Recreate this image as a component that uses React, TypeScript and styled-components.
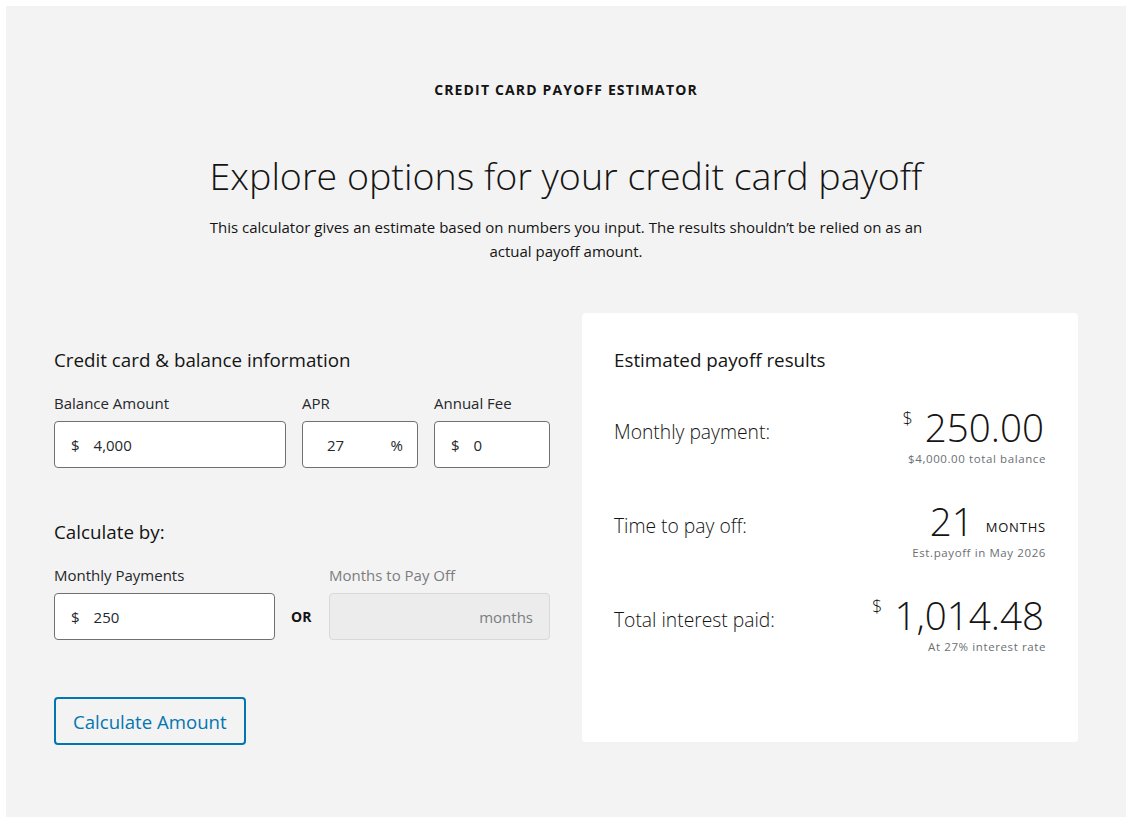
import React from 'react'
import styled, { createGlobalStyle } from 'styled-components'

const GlobalStyle = createGlobalStyle`
  html, body {
    margin: 0;
    padding: 0;
    background: #ffffff;
  }
  body {
    padding: 6px;
    font-family: 'Open Sans', 'Noto Sans', sans-serif;
    color: #141414;
  }
`

const Page = styled.main`
  background: #f3f3f3;
  width: 1120px;
  height: 811px;
  box-sizing: border-box;
  padding: 75px 48px 0;
  display: flex;
  flex-direction: column;
  align-items: center;
`

const Eyebrow = styled.div`
  font-size: 14px;
  font-weight: 700;
  letter-spacing: 1.15px;
  line-height: 18px;
  color: #141414;
`

const Headline = styled.h1`
  margin: 53px 0 0;
  font-size: 37.6px;
  font-weight: 300;
  line-height: 48px;
  color: #141414;
`

const Intro = styled.p`
  margin: 15px 0 0;
  width: 730px;
  text-align: center;
  font-size: 15px;
  line-height: 24px;
  color: #141414;
`

const Columns = styled.div`
  margin-top: 50px;
  width: 100%;
  display: grid;
  grid-template-columns: 496px 496px;
  justify-content: space-between;
  align-items: start;
`

const FormColumn = styled.section`
  display: flex;
  flex-direction: column;
  padding-top: 34px;
`

const SectionTitle = styled.h2<{ $top?: number }>`
  margin: ${p => p.$top ?? 0}px 0 0;
  font-size: 18.8px;
  font-weight: 500;
  line-height: 26px;
  color: #141414;
`

const FieldRow = styled.div<{ $cols: string }>`
  margin-top: 20px;
  display: grid;
  grid-template-columns: ${p => p.$cols};
  column-gap: 16px;
  align-items: end;
`

const Field = styled.label`
  display: flex;
  flex-direction: column;
  gap: 8px;
`

const Label = styled.span<{ $muted?: boolean }>`
  font-size: 15px;
  line-height: 20px;
  color: ${p => (p.$muted ? '#7b7d80' : '#25282b')};
`

const InputBox = styled.div<{ $disabled?: boolean; $pad?: number }>`
  height: 47px;
  box-sizing: border-box;
  border: 1px solid ${p => (p.$disabled ? '#d9d9d9' : '#707070')};
  border-radius: 4px;
  background: ${p => (p.$disabled ? '#ececec' : '#ffffff')};
  display: flex;
  align-items: center;
  padding: 0 ${p => p.$pad ?? 16}px;
  font-size: 15px;
  color: #25282b;
`

const Prefix = styled.span`
  color: #25282b;
  margin-right: 14px;
`

const Value = styled.span<{ $indent?: number }>`
  flex: 1;
  padding-left: ${p => p.$indent ?? 0}px;
  color: #25282b;
`

const Suffix = styled.span<{ $muted?: boolean }>`
  color: ${p => (p.$muted ? '#7b7d80' : '#25282b')};
`

const Or = styled.span`
  height: 47px;
  display: flex;
  align-items: center;
  font-size: 14px;
  font-weight: 700;
  color: #141414;
`

const Button = styled.button`
  margin-top: 57px;
  align-self: flex-start;
  height: 48px;
  padding: 0 17px;
  border: 2px solid #0276b1;
  border-radius: 4px;
  background: transparent;
  font-family: inherit;
  font-size: 18.6px;
  color: #0276b1;
  cursor: pointer;
`

const ResultCard = styled.section`
  background: #ffffff;
  border-radius: 4px;
  height: 429px;
  box-sizing: border-box;
  padding: 34px 32px 0;
  display: flex;
  flex-direction: column;
`

const ResultRow = styled.div<{ $top: number }>`
  margin-top: ${p => p.$top}px;
  display: flex;
  justify-content: space-between;
  align-items: flex-start;
`

const RowLabel = styled.span`
  font-size: 19.3px;
  font-weight: 300;
  line-height: 26px;
  color: #141414;
  padding-top: 16px;
`

const Figure = styled.div`
  display: flex;
  flex-direction: column;
  align-items: flex-end;
  padding-right: 2px;
`

const Amount = styled.div`
  display: flex;
  align-items: flex-start;
  font-size: 38.6px;
  font-weight: 300;
  line-height: 48px;
  height: 44px;
  color: #141414;
`

const Currency = styled.span`
  font-size: 18px;
  line-height: 22px;
  margin-right: 12px;
  margin-top: 4px;
`

const Unit = styled.span`
  font-size: 13px;
  font-weight: 400;
  letter-spacing: 0.8px;
  line-height: 20px;
  align-self: flex-end;
  margin-left: 12px;
  margin-right: -2px;
  margin-bottom: 4px;
`

const Note = styled.span`
  font-size: 11.5px;
  letter-spacing: 0.6px;
  line-height: 16px;
  color: #6b6f73;
  margin-top: 4px;
  margin-right: -2px;
`

const results = [
  {
    label: 'Monthly payment:',
    currency: true,
    value: '250.00',
    note: '$4,000.00 total balance',
    top: 30,
  },
  {
    label: 'Time to pay off:',
    value: '21',
    unit: 'MONTHS',
    note: 'Est.payoff in May 2026',
    top: 30,
  },
  {
    label: 'Total interest paid:',
    currency: true,
    value: '1,014.48',
    note: 'At 27% interest rate',
    top: 30,
  },
]

const App = () => {
  return (
    <>
      <GlobalStyle />
      <Page>
        <Eyebrow>CREDIT CARD PAYOFF ESTIMATOR</Eyebrow>
        <Headline>Explore options for your credit card payoff</Headline>
        <Intro>
          This calculator gives an estimate based on numbers you input. The
          results shouldn’t be relied on as an actual payoff amount.
        </Intro>
        <Columns>
          <FormColumn>
            <SectionTitle>Credit card &amp; balance information</SectionTitle>
            <FieldRow $cols="232px 116px 116px">
              <Field>
                <Label>Balance Amount</Label>
                <InputBox>
                  <Prefix>$</Prefix>
                  <Value>4,000</Value>
                </InputBox>
              </Field>
              <Field>
                <Label>APR</Label>
                <InputBox $pad={14}>
                  <Value $indent={10}>27</Value>
                  <Suffix>%</Suffix>
                </InputBox>
              </Field>
              <Field>
                <Label>Annual Fee</Label>
                <InputBox>
                  <Prefix>$</Prefix>
                  <Value>0</Value>
                </InputBox>
              </Field>
            </FieldRow>

            <SectionTitle $top={51}>Calculate by:</SectionTitle>
            <FieldRow $cols="221px auto 221px">
              <Field>
                <Label>Monthly Payments</Label>
                <InputBox>
                  <Prefix>$</Prefix>
                  <Value>250</Value>
                </InputBox>
              </Field>
              <Or>OR</Or>
              <Field>
                <Label $muted>Months to Pay Off</Label>
                <InputBox $disabled>
                  <Value />
                  <Suffix $muted>months</Suffix>
                </InputBox>
              </Field>
            </FieldRow>

            <Button>Calculate Amount</Button>
          </FormColumn>

          <ResultCard>
            <SectionTitle>Estimated payoff results</SectionTitle>
            {results.map(r => (
              <ResultRow key={r.label} $top={r.top}>
                <RowLabel>{r.label}</RowLabel>
                <Figure>
                  <Amount>
                    {r.currency && <Currency>$</Currency>}
                    {r.value}
                    {r.unit && <Unit>{r.unit}</Unit>}
                  </Amount>
                  <Note>{r.note}</Note>
                </Figure>
              </ResultRow>
            ))}
          </ResultCard>
        </Columns>
      </Page>
    </>
  )
}

export default App
